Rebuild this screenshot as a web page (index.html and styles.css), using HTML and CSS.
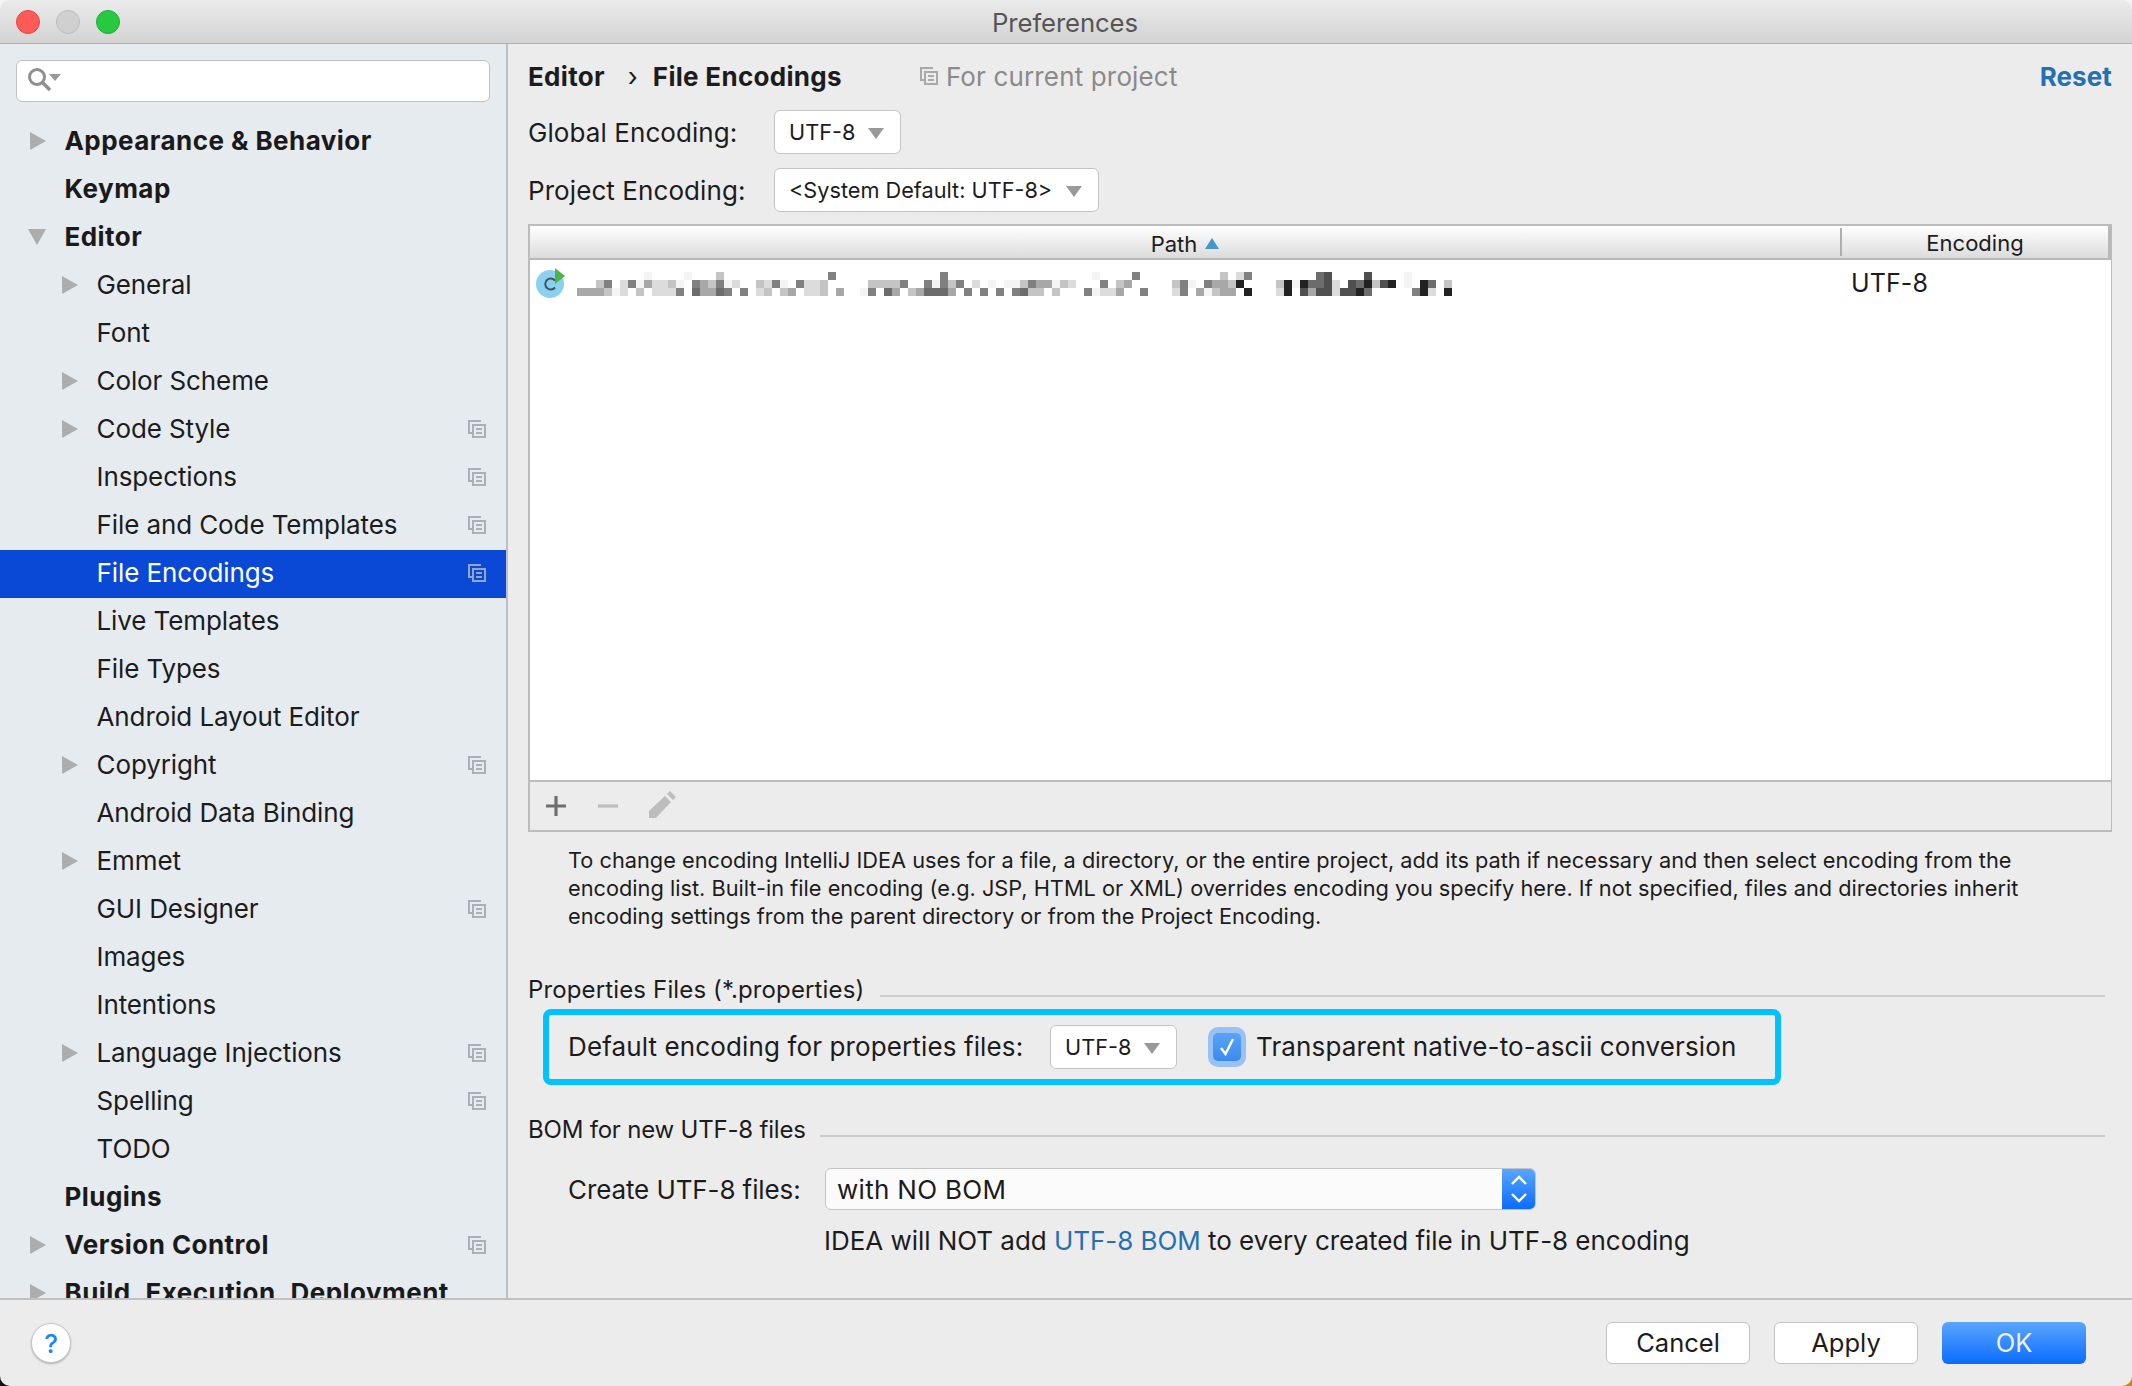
FILE: index.html
```html
<!DOCTYPE html>
<html lang="en">
<head>
<meta charset="utf-8">
<title>Preferences</title>
<link rel="stylesheet" href="styles.css">
</head>
<body>
<svg class="defs" width="0" height="0">
  <symbol id="copy" viewBox="0 0 18 18">
    <path d="M13 1H1v12h3" fill="none" stroke="currentColor" stroke-width="2"/>
    <path d="M5 5h12v12H5zM8 9h6M8 13h6" fill="none" stroke="currentColor" stroke-width="2"/>
  </symbol>
</svg>
<div class="window">
  <header class="titlebar">
    <div class="lights">
      <span class="light red"></span><span class="light grey"></span><span class="light green"></span>
    </div>
    <div class="title">Preferences</div>
  </header>
  <div class="main">
    <aside class="sidebar">
      <div class="search">
        <svg class="search-icon" width="38" height="26" viewBox="0 0 38 26">
          <circle cx="11" cy="10" r="7.5" fill="none" stroke="#8f8f8f" stroke-width="3"/>
          <path d="M16 15l8 8" stroke="#8f8f8f" stroke-width="3.5" fill="none"/>
          <path d="M23 7h12l-6 7z" fill="#999"/>
        </svg>
      </div>
      <div class="tree">
        <div class="row top"><span class="tw"><i class="arrow"></i></span>Appearance &amp; Behavior</div>
        <div class="row top"><span class="tw"></span>Keymap</div>
        <div class="row top"><span class="tw"><i class="arrow down"></i></span>Editor</div>
        <div class="row sub"><span class="tw"><i class="arrow"></i></span>General</div>
        <div class="row sub"><span class="tw"></span>Font</div>
        <div class="row sub"><span class="tw"><i class="arrow"></i></span>Color Scheme</div>
        <div class="row sub"><span class="tw"><i class="arrow"></i></span>Code Style<svg class="copy"><use href="#copy"/></svg></div>
        <div class="row sub"><span class="tw"></span>Inspections<svg class="copy"><use href="#copy"/></svg></div>
        <div class="row sub"><span class="tw"></span>File and Code Templates<svg class="copy"><use href="#copy"/></svg></div>
        <div class="row sub selected"><span class="tw"></span>File Encodings<svg class="copy"><use href="#copy"/></svg></div>
        <div class="row sub"><span class="tw"></span>Live Templates</div>
        <div class="row sub"><span class="tw"></span>File Types</div>
        <div class="row sub"><span class="tw"></span>Android Layout Editor</div>
        <div class="row sub"><span class="tw"><i class="arrow"></i></span>Copyright<svg class="copy"><use href="#copy"/></svg></div>
        <div class="row sub"><span class="tw"></span>Android Data Binding</div>
        <div class="row sub"><span class="tw"><i class="arrow"></i></span>Emmet</div>
        <div class="row sub"><span class="tw"></span>GUI Designer<svg class="copy"><use href="#copy"/></svg></div>
        <div class="row sub"><span class="tw"></span>Images</div>
        <div class="row sub"><span class="tw"></span>Intentions</div>
        <div class="row sub"><span class="tw"><i class="arrow"></i></span>Language Injections<svg class="copy"><use href="#copy"/></svg></div>
        <div class="row sub"><span class="tw"></span>Spelling<svg class="copy"><use href="#copy"/></svg></div>
        <div class="row sub"><span class="tw"></span>TODO</div>
        <div class="row top"><span class="tw"></span>Plugins</div>
        <div class="row top"><span class="tw"><i class="arrow"></i></span>Version Control<svg class="copy"><use href="#copy"/></svg></div>
        <div class="row top"><span class="tw"><i class="arrow"></i></span>Build, Execution, Deployment</div>
      </div>
    </aside>
    <section class="content">
      <div class="crumbs">
        <span class="crumb">Editor</span>
        <span class="crumb-sep">›</span>
        <span class="crumb">File Encodings</span>
        <svg class="copy crumb-copy"><use href="#copy"/></svg>
        <span class="project">For current project</span>
        <a class="reset">Reset</a>
      </div>
      <div class="form-row global">
        <span class="label">Global Encoding:</span>
        <div class="combo small">UTF-8<i class="caret"></i></div>
      </div>
      <div class="form-row project-row">
        <span class="label">Project Encoding:</span>
        <div class="combo wide">&lt;System Default: UTF-8&gt;<i class="caret"></i></div>
      </div>
      <div class="table">
        <div class="thead">
          <div class="th">Path<i class="sort"></i></div>
          <div class="th enc">Encoding</div>
        </div>
        <div class="tbody">
          <div class="tr">
            <div class="cell-path">
              <svg class="file-icon" width="32" height="32" viewBox="0 0 32 32">
                <circle cx="15" cy="18" r="14" fill="#8bd0ee"/>
                <path d="M20 14.5a5.5 5.5 0 1 0 0 7" fill="none" stroke="#3f5560" stroke-width="2"/>
                <path d="M20 2l10 8-10 8z" fill="#4db348"/>
              </svg>
              <svg class="blur" width="888" height="24" viewBox="40 0 888 24">
                <path class="b1" d="M112 4h8M152 4h8M560 4h8M872 4h8M104 12h8M144 12h8M192 12h8M248 12h8M400 12h8M456 12h8M472 12h8M480 12h8M520 12h8M656 12h8M760 12h8M872 12h8M80 20h8M328 20h8M560 20h8M672 20h8"/>
                <path class="b2" d="M704 4h8M88 12h8M120 12h8M128 12h8M200 12h8M232 12h8M272 12h8M280 12h8M440 12h8M536 12h8M800 12h8M88 20h8M120 20h8M128 20h8M136 20h8M224 20h8M272 20h8M280 20h8M568 20h8M576 20h8M640 20h8M744 20h8M800 20h8M896 20h8"/>
                <path class="b3" d="M184 4h8M688 4h8M64 12h8M136 12h8M176 12h8M224 12h8M288 12h8M336 12h8M344 12h8M352 12h8M360 12h8M416 12h8M488 12h8M528 12h8M584 12h8M640 12h8M696 12h8M744 12h8M840 12h8M912 12h8M72 20h8M104 20h8M232 20h8M248 20h8M288 20h8M376 20h8M496 20h8M504 20h8M520 20h8M680 20h8"/>
                <path class="b4" d="M112 12h8M168 12h8M504 12h8M512 12h8M592 12h8M680 12h8M688 12h8M45 20h11M56 20h8M64 20h8M168 20h8M176 20h8M256 20h8M304 20h8M360 20h8M384 20h8M416 20h8M584 20h8M664 20h8M688 20h8M696 20h8M776 20h8"/>
                <path class="b5" d="M296 4h8M408 4h8M600 4h8M712 4h8M72 12h8M96 12h8M160 12h8M184 12h8M240 12h8M264 12h8M368 12h8M392 12h8M408 12h8M424 12h8M496 12h8M568 12h8M648 12h8M672 12h8M144 20h8M192 20h8M208 20h8M336 20h8M432 20h8M448 20h8M464 20h8M480 20h8M552 20h8M608 20h8M648 20h8M880 20h8"/>
                <path class="b6" d="M784 4h8M776 12h8M784 12h8M824 12h8M896 12h8M160 20h8M184 20h8M352 20h8M392 20h8M400 20h8M408 20h8M488 20h8M832 20h8"/>
                <path class="b7" d="M792 4h8M832 4h8M792 12h8M816 12h8M848 12h8M768 20h8M784 20h8M792 20h8M808 20h8M816 20h8"/>
                <path class="b8" d="M704 12h8M752 12h8M768 12h8M832 12h8M856 12h8M888 12h8M712 20h8M752 20h8M824 20h8M888 20h8M912 20h8"/>
              </svg>
            </div>
            <div class="cell-enc">UTF-8</div>
          </div>
        </div>
        <div class="toolbar">
          <svg width="20" height="20" viewBox="0 0 20 20"><path d="M10 0v20M0 10h20" stroke="#6e6e6e" stroke-width="3.2" fill="none"/></svg>
          <svg class="tool-minus" width="20" height="20" viewBox="0 0 20 20"><path d="M0 10h20" stroke="#bdbdbd" stroke-width="3.2" fill="none"/></svg>
          <svg class="tool-pencil" width="28" height="28" viewBox="0 0 28 28"><path d="M1 27v-7L17 5l6 6L8 27zM19 3l3-3 6 6-3 3z" fill="#bdbdbd"/></svg>
        </div>
      </div>
      <p class="desc">To change encoding IntelliJ IDEA uses for a file, a directory, or the entire project, add its path if necessary and then select encoding from the<br>encoding list. Built-in file encoding (e.g. JSP, HTML or XML) overrides encoding you specify here. If not specified, files and directories inherit<br>encoding settings from the parent directory or from the Project Encoding.</p>
      <div class="group props-title"><span>Properties Files (*.properties)</span><i class="rule"></i></div>
      <div class="highlight">
        <span class="label default-label">Default encoding for properties files:</span>
        <div class="combo small">UTF-8<i class="caret"></i></div>
        <div class="check-ring">
          <div class="check-box">
            <svg width="18" height="22" viewBox="0 0 18 22"><path d="M3 12l4.500 6L15 3" fill="none" stroke="#fff" stroke-width="2.400"/></svg>
          </div>
        </div>
        <span class="label check-label">Transparent native-to-ascii conversion</span>
      </div>
      <div class="group bom-title"><span>BOM for new UTF-8 files</span><i class="rule"></i></div>
      <div class="form-row create-row">
        <span class="label create-label">Create UTF-8 files:</span>
        <div class="select">
          <span class="select-value">with NO BOM</span>
          <span class="stepper">
            <svg width="20" height="32" viewBox="0 0 20 32"><path d="M3 11l7-7 7 7M3 21l7 7 7-7" fill="none" stroke="#fff" stroke-width="2.400"/></svg>
          </span>
        </div>
      </div>
      <p class="note">IDEA will NOT add <a class="link">UTF-8 BOM</a> to every created file in UTF-8 encoding</p>
    </section>
  </div>
  <footer class="footer">
    <div class="help">?</div>
    <div class="buttons">
      <button class="btn">Cancel</button>
      <button class="btn">Apply</button>
      <button class="btn primary">OK</button>
    </div>
  </footer>
</div>
</body>
</html>
```

FILE: styles.css
```css
* { box-sizing: border-box; }
html, body { margin: 0; padding: 0; }
body {
  width: 2132px;
  height: 1386px;
  overflow: hidden;
  background:
    linear-gradient(#f4f4f4, #f4f4f4) top / 100% 50% no-repeat,
    linear-gradient(90deg, #111 50%, #c88a12 50%);
  font-family: Inter, "Noto Sans", sans-serif;
  color: #1c1c1c;
}
.defs { position: absolute; }
.window {
  width: 2132px;
  height: 1386px;
  display: flex;
  flex-direction: column;
  background: #ececec;
  border-radius: 10px;
  overflow: hidden;
}

/* title bar */
.titlebar {
  height: 44px;
  flex: none;
  display: grid;
  grid-template-columns: 1fr auto 1fr;
  align-items: center;
  padding-left: 16px;
  background: linear-gradient(#ebebeb, #d3d3d3);
  border-bottom: 1px solid #aeaeae;
}
.lights { display: flex; gap: 16px; }
.light { width: 24px; height: 24px; border-radius: 50%; }
.light.red { background: #fc5b57; border: 1px solid #e5453f; }
.light.grey { background: #d0d0d0; border: 1px solid #bcbcbc; }
.light.green { background: #26c940; border: 1px solid #1eae33; }
.title { font-size: 25.700px; color: #555; margin: 2px 18px 0 0; letter-spacing: -0.1px; }

/* layout */
.main { flex: 1; display: flex; min-height: 0; }

/* sidebar */
.sidebar {
  width: 508px;
  flex: none;
  background: #e6ebf0;
  border-right: 2px solid #bdbfc1;
  overflow: hidden;
}
.search {
  height: 42px;
  margin: 16px 16px 0;
  background: #fff;
  border: 1.500px solid #c0c0c0;
  border-radius: 6px;
  display: flex;
  align-items: center;
  padding: 0 0 2px 9px;
}
.tree { margin-top: 16px; }
.row {
  height: 48px;
  display: flex;
  align-items: center;
  font-size: 26px;
  white-space: nowrap;
  padding-right: 20px;
  padding-bottom: 3px;
  letter-spacing: -0.1px;
}
.row.top { font-weight: 700; padding-left: 30px; color: #1a1a1a; letter-spacing: 0.45px; }
.row.sub { padding-left: 62px; }
.tw { width: 34.500px; flex: none; display: flex; align-items: center; }
.arrow {
  display: block;
  width: 0; height: 0;
  border-left: 16px solid #adadad;
  border-top: 9px solid transparent;
  border-bottom: 9px solid transparent;
}
.arrow.down {
  margin-left: -2px;
  border-top: 16px solid #adadad;
  border-left: 9px solid transparent;
  border-right: 9px solid transparent;
  border-bottom: 0;
}
.copy { width: 18px; height: 18px; color: #a9b0b7; margin-left: auto; flex: none; }
.row.selected { background: #0a48d6; color: #fff; }
.row.selected .copy { color: #93a5c4; }

/* content */
.content { flex: 1; min-width: 0; padding: 0 20px; display: flex; flex-direction: column; }
.crumbs { height: 66px; flex: none; display: flex; align-items: center; font-size: 26px; white-space: nowrap; padding-bottom: 2px; }
.crumb { font-weight: 700; letter-spacing: 0.3px; }
.crumb-sep { margin: 0 15px 0 23px; font-size: 26px; }
.crumb-copy { margin: 0 8px 0 78px; width: 18px; height: 18px; color: #a9a9a9; }
.project { color: #8a8a8a; letter-spacing: 0.15px; }
.reset { margin-left: auto; font-weight: 700; color: #2470b3; letter-spacing: 0.1px; }

.form-row { display: flex; align-items: center; flex: none; }
.label { font-size: 26px; white-space: nowrap; letter-spacing: 0.08px; }
.global { height: 43px; }
.global .label { padding-top: 1px; }
.global .label, .project-row .label { width: 246px; }
.project-row { height: 44px; margin-top: 15px; }
.combo {
  display: flex;
  align-items: center;
  justify-content: space-between;
  background: #fff;
  border: 1px solid #c4c4c4;
  border-radius: 6px;
  font-size: 21.700px;
  padding: 0 16px 0 14px;
  height: 100%;
  white-space: nowrap;
}
.combo.small { width: 127px; height: 44px; }
.combo.wide { width: 325px; }
.caret {
  display: block;
  width: 0; height: 0;
  border-top: 11px solid #999;
  border-left: 8px solid transparent;
  border-right: 8px solid transparent;
  margin-top: 3px;
}

/* table */
.table {
  height: 608px;
  margin-top: 12px;
  flex: none;
  border: 2px solid #bcbcbc;
  border-right-width: 1px;
  display: flex;
  flex-direction: column;
}
.thead {
  height: 34px;
  flex: none;
  display: grid;
  grid-template-columns: 1310px 1fr;
  background: linear-gradient(#fff, #dcdcdc);
  border-bottom: 2px solid #b8b8b8;
  border-right: 3px solid #b8b8b8;
}
.th {
  font-size: 22px;
  display: flex;
  align-items: center;
  justify-content: center;
  padding-top: 3px;
}
.th.enc { border-left: 2px solid #aeaeae; margin: 2px 0; padding-top: 1px; }
.sort {
  display: block;
  width: 0; height: 0;
  margin: 0 0 0 8px;
  border-bottom: 11px solid #4596c9;
  border-left: 7px solid transparent;
  border-right: 7px solid transparent;
}
.tbody { flex: 1; background: #fff; border-bottom: 2px solid #bcbcbc; }
.tr { display: grid; grid-template-columns: 1311px 1fr; }
.cell-path { display: flex; align-items: flex-start; padding: 6px 0 0 5px; }
.file-icon { flex: none; }
.blur { margin: 6px 0 0 5px; flex: none; shape-rendering: crispEdges; }
.blur path { stroke-width: 8; fill: none; }
.b1 { stroke: #f4f4f4; }
.b2 { stroke: #dcdcdc; }
.b3 { stroke: #c4c4c4; }
.b4 { stroke: #a8a8a8; }
.b5 { stroke: #808080; }
.b6 { stroke: #6c6c6c; }
.b7 { stroke: #505050; }
.b8 { stroke: #222; }
.cell-enc { font-size: 25px; padding: 8px 0 0 10px; letter-spacing: 0.1px; }
.toolbar {
  height: 48px;
  flex: none;
  display: flex;
  align-items: center;
  padding-left: 16px;
}
.tool-minus { margin-left: 32px; }
.tool-pencil { margin: -2px 0 0 30px; }

.desc { margin: 14px 0 0 40px; font-size: 21.750px; line-height: 28px; flex: none; white-space: nowrap; }

.group { display: flex; align-items: center; height: 32px; font-size: 24px; flex: none; white-space: nowrap; }
.group span { padding-bottom: 2px; }
.rule { flex: 1; height: 2px; background: #cdcdcd; margin: 12px 7px 0 16px; }
.props-title { margin-top: 44px; }
.props-title span { letter-spacing: 0.14px; }
.bom-title { margin-top: 29px; }
.bom-title span { letter-spacing: -0.2px; }
.bom-title .rule { margin-left: 14px; }

.highlight {
  width: 1238px;
  height: 76px;
  margin: 3px 0 0 15px;
  flex: none;
  border: 6px solid #00c2ff;
  border-radius: 8px;
  display: flex;
  align-items: center;
  padding-left: 19px;
}
.highlight .label { padding-bottom: 2px; }
.default-label { width: 482px; letter-spacing: 0.12px; }
.check-ring {
  margin-left: 31px;
  width: 38px;
  height: 40px;
  background: #98c2f4;
  border-radius: 10px;
  display: flex;
  align-items: center;
  justify-content: center;
}
.check-box {
  width: 28px;
  height: 28px;
  border-radius: 5px;
  background: linear-gradient(#5aa2f6, #3a8bef);
  display: flex;
  align-items: center;
  justify-content: center;
}
.check-label { margin-left: 10px; letter-spacing: 0.13px; }

.create-row { height: 42px; margin-top: 22px; padding-left: 40px; }
.create-label { width: 257px; letter-spacing: -0.1px; }
.select {
  width: 711px;
  height: 42px;
  background: #fbfbfb;
  border: 1px solid #c4c4c4;
  border-radius: 6px;
  display: flex;
  align-items: center;
  justify-content: space-between;
  font-size: 26px;
  overflow: hidden;
}
.select-value { padding-left: 11px; letter-spacing: 0.3px; }
.stepper {
  width: 33px;
  height: 100%;
  background: linear-gradient(#5ba6fb, #0a6cff);
  display: flex;
  align-items: center;
  justify-content: center;
}
.note { margin: 14px 0 0 296px; font-size: 26px; line-height: 34px; white-space: nowrap; flex: none; letter-spacing: -0.04px; }
.link { color: #2470b3; }

/* footer */
.footer {
  height: 88px;
  flex: none;
  border-top: 2px solid #c1c1c1;
  display: flex;
  align-items: center;
  justify-content: space-between;
  padding: 0 46px 0 31px;
}
.help {
  width: 40px;
  height: 40px;
  border-radius: 50%;
  background: #fff;
  border: 1px solid #c6c6c6;
  box-shadow: 0 1px 2px rgba(0,0,0,.25);
  color: #1a84ff;
  font-size: 26px;
  font-weight: 500;
  display: flex;
  align-items: center;
  justify-content: center;
}
.buttons { display: flex; gap: 24px; }
.btn {
  width: 144px;
  height: 42px;
  padding: 0 0 2px;
  background: #fff;
  border: 1px solid #c4c4c4;
  border-radius: 6px;
  font-family: inherit;
  font-size: 25.500px;
  color: #1c1c1c;
}
.btn.primary {
  background: linear-gradient(#5ba6fb, #0a6cff);
  border: none;
  color: #f0f0f0;
}
```
